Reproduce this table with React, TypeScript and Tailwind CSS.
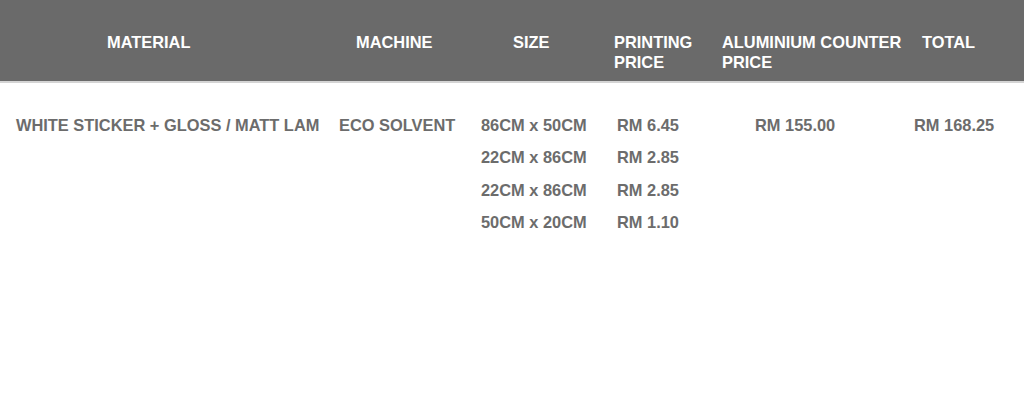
export default function App() {
  const rows = [
    { material: "WHITE STICKER + GLOSS / MATT LAM", machine: "ECO SOLVENT", size: "86CM x 50CM", printing: "RM 6.45", aluminium: "RM 155.00", total: "RM 168.25" },
    { material: "", machine: "", size: "22CM x 86CM", printing: "RM 2.85", aluminium: "", total: "" },
    { material: "", machine: "", size: "22CM x 86CM", printing: "RM 2.85", aluminium: "", total: "" },
    { material: "", machine: "", size: "50CM x 20CM", printing: "RM 1.10", aluminium: "", total: "" },
  ]

  return (
    <div className="w-[1024px] h-[410px] bg-white font-['Liberation_Sans',Arial,sans-serif] font-bold text-[16.4px]">
      {/* Header */}
      <div className="grid grid-cols-[329px_146px_130px_107px_193px_1fr] h-[83px] bg-[#6a6a6a] border-b-2 border-[#d4d4d4] text-white leading-5 pt-[32px]">
        <div className="pl-[107px]">MATERIAL</div>
        <div className="pl-[27px]">MACHINE</div>
        <div className="pl-[38px]">SIZE</div>
        <div className="pl-[9px]">
          PRINTING
          <br />
          PRICE
        </div>
        <div className="pl-[10px]">
          ALUMINIUM COUNTER
          <br />
          PRICE
        </div>
        <div className="pl-[17px]">TOTAL</div>
      </div>

      {/* Rows */}
      <div className="mt-[26px] text-[#6c6c6c] leading-[32.4px]">
        {rows.map((r, i) => (
          <div key={i} className="grid grid-cols-[329px_146px_130px_107px_193px_1fr]">
            <div className="pl-[16px] whitespace-nowrap">{r.material}</div>
            <div className="pl-[10px] whitespace-nowrap">{r.machine}</div>
            <div className="pl-[6px] whitespace-nowrap">{r.size}</div>
            <div className="pl-[12px] whitespace-nowrap">{r.printing}</div>
            <div className="pl-[43px] whitespace-nowrap">{r.aluminium}</div>
            <div className="pl-[9px] whitespace-nowrap">{r.total}</div>
          </div>
        ))}
      </div>
    </div>
  )
}
